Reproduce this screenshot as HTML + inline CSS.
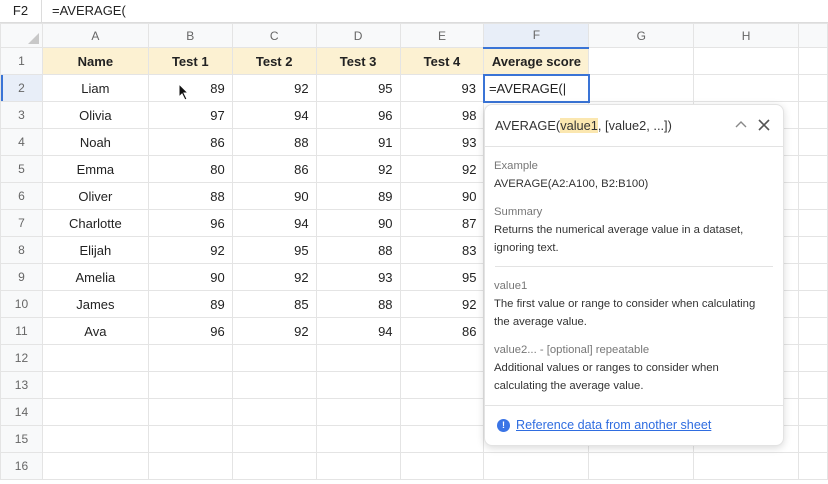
<!DOCTYPE html>
<html><head><meta charset="utf-8"><style>
*{box-sizing:border-box;margin:0;padding:0}
body{width:828px;height:484px;overflow:hidden;background:#fff;font-family:"Liberation Sans",Arial,sans-serif;color:#222;position:relative}
.fb{position:absolute;left:0;top:0;width:828px;height:23px;border-bottom:1px solid #dcdcdc;font-size:13px}
.fb .ref{position:absolute;left:0;top:0;width:42px;height:22px;border-right:1px solid #dcdcdc;text-align:center;line-height:22px}
.fb .f{position:absolute;left:52px;top:0;line-height:22px}
table{position:absolute;left:0;top:23px;border-collapse:collapse;table-layout:fixed;font-size:13px}
td{border:1px solid #e4e4e4;height:27px;padding:0 7px;white-space:nowrap;overflow:hidden}
tr.h td{height:24px;background:#f8f9fa;color:#666;text-align:center;font-size:12px}
td.rh{background:#f8f9fa;color:#666;text-align:center;font-size:12px;padding:0}
tr.y td.c{background:#fcf1d2;font-weight:bold;text-align:center}
td.n{text-align:right}
td.t{text-align:center}
.pop{position:absolute;left:484px;top:104px;width:300px;height:342px;background:#fff;border:1px solid #e3e3e3;border-radius:8px;box-shadow:0 2px 8px rgba(0,0,0,.15);font-size:11.3px;color:#333}
.pop .hd{height:42px;border-bottom:1px solid #e3e3e3;padding:13px 10px;font-size:12.8px}
.hl{background:#fbe7b0}
.lab{color:#777}
</style></head><body>
<div class="fb"><div class="ref">F2</div><div class="f">=AVERAGE(</div></div>
<table>
<colgroup><col style="width:42px"><col style="width:106px"><col style="width:84px"><col style="width:84px"><col style="width:84px"><col style="width:84px"><col style="width:105px"><col style="width:105px"><col style="width:105px"><col style="width:29px"></colgroup>
<tr class="h"><td style="position:relative"><div style="position:absolute;right:3px;bottom:3px;width:0;height:0;border-left:11px solid transparent;border-bottom:11px solid #c8c8c8"></div></td><td>A</td><td>B</td><td>C</td><td>D</td><td>E</td><td style="background:#e8eef8;border-bottom:2px solid #3a74d6">F</td><td>G</td><td>H</td><td></td></tr>
<tr class="y"><td class="rh">1</td><td class="c">Name</td><td class="c">Test 1</td><td class="c">Test 2</td><td class="c">Test 3</td><td class="c">Test 4</td><td class="c">Average score</td><td></td><td></td><td></td></tr>
<tr><td class="rh" style="background:#e8eef8;box-shadow:inset 2px 0 #3a74d6">2</td><td class="t">Liam</td><td class="n">89</td><td class="n">92</td><td class="n">95</td><td class="n">93</td><td style="border:2px solid #3a74d6;padding:0 4px">=AVERAGE(|</td><td></td><td></td><td></td></tr>
<tr><td class="rh">3</td><td class="t">Olivia</td><td class="n">97</td><td class="n">94</td><td class="n">96</td><td class="n">98</td><td></td><td></td><td></td><td></td></tr>
<tr><td class="rh">4</td><td class="t">Noah</td><td class="n">86</td><td class="n">88</td><td class="n">91</td><td class="n">93</td><td></td><td></td><td></td><td></td></tr>
<tr><td class="rh">5</td><td class="t">Emma</td><td class="n">80</td><td class="n">86</td><td class="n">92</td><td class="n">92</td><td></td><td></td><td></td><td></td></tr>
<tr><td class="rh">6</td><td class="t">Oliver</td><td class="n">88</td><td class="n">90</td><td class="n">89</td><td class="n">90</td><td></td><td></td><td></td><td></td></tr>
<tr><td class="rh">7</td><td class="t">Charlotte</td><td class="n">96</td><td class="n">94</td><td class="n">90</td><td class="n">87</td><td></td><td></td><td></td><td></td></tr>
<tr><td class="rh">8</td><td class="t">Elijah</td><td class="n">92</td><td class="n">95</td><td class="n">88</td><td class="n">83</td><td></td><td></td><td></td><td></td></tr>
<tr><td class="rh">9</td><td class="t">Amelia</td><td class="n">90</td><td class="n">92</td><td class="n">93</td><td class="n">95</td><td></td><td></td><td></td><td></td></tr>
<tr><td class="rh">10</td><td class="t">James</td><td class="n">89</td><td class="n">85</td><td class="n">88</td><td class="n">92</td><td></td><td></td><td></td><td></td></tr>
<tr><td class="rh">11</td><td class="t">Ava</td><td class="n">96</td><td class="n">92</td><td class="n">94</td><td class="n">86</td><td></td><td></td><td></td><td></td></tr>
<tr><td class="rh">12</td><td></td><td></td><td></td><td></td><td></td><td></td><td></td><td></td><td></td></tr>
<tr><td class="rh">13</td><td></td><td></td><td></td><td></td><td></td><td></td><td></td><td></td><td></td></tr>
<tr><td class="rh">14</td><td></td><td></td><td></td><td></td><td></td><td></td><td></td><td></td><td></td></tr>
<tr><td class="rh">15</td><td></td><td></td><td></td><td></td><td></td><td></td><td></td><td></td><td></td></tr>
<tr><td class="rh">16</td><td></td><td></td><td></td><td></td><td></td><td></td><td></td><td></td><td></td></tr>
</table>
<svg style="position:absolute;left:178px;top:83px" width="12" height="18" viewBox="0 0 12 18"><path d="M1 1 L1 14 L4 11 L7 17 L9 16 L6 10 L10 10 Z" fill="#111" stroke="#fff" stroke-width="1"/></svg>
<div class="pop">
<div class="hd">AVERAGE(<span class="hl">value1</span>, [value2, ...])
<svg style="position:absolute;right:36px;top:15px" width="12" height="8" viewBox="0 0 12 8"><path d="M1 7 L6 2 L11 7" fill="none" stroke="#888" stroke-width="1.4"/></svg>
<svg style="position:absolute;right:13px;top:14px" width="12" height="12" viewBox="0 0 12 12"><path d="M1 1 L11 11 M11 1 L1 11" fill="none" stroke="#555" stroke-width="1.6"/></svg></div>
<div style="position:absolute;left:9px;top:52px;line-height:18px">
<div class="lab">Example</div><div>AVERAGE(A2:A100, B2:B100)</div>
<div class="lab" style="margin-top:10px">Summary</div><div>Returns the numerical average value in a dataset,<br>ignoring text.</div></div>
<div style="position:absolute;left:10px;right:10px;top:161px;border-top:1px solid #e3e3e3"></div>
<div style="position:absolute;left:9px;top:172px;line-height:18px">
<div class="lab">value1</div><div>The first value or range to consider when calculating<br>the average value.</div>
<div class="lab" style="margin-top:10px">value2... - [optional] repeatable</div><div>Additional values or ranges to consider when<br>calculating the average value.</div></div>
<div style="position:absolute;left:0;right:0;top:300px;border-top:1px solid #e3e3e3"></div>
<div style="position:absolute;left:12px;top:314px;width:13px;height:13px;border-radius:50%;background:#3a74e6;color:#fff;font-size:9px;font-weight:bold;text-align:center;line-height:13px">!</div>
<div style="position:absolute;left:31px;top:313px;color:#2f6de0;text-decoration:underline;font-size:12.6px">Reference data from another sheet</div>
</div>
</body></html>
